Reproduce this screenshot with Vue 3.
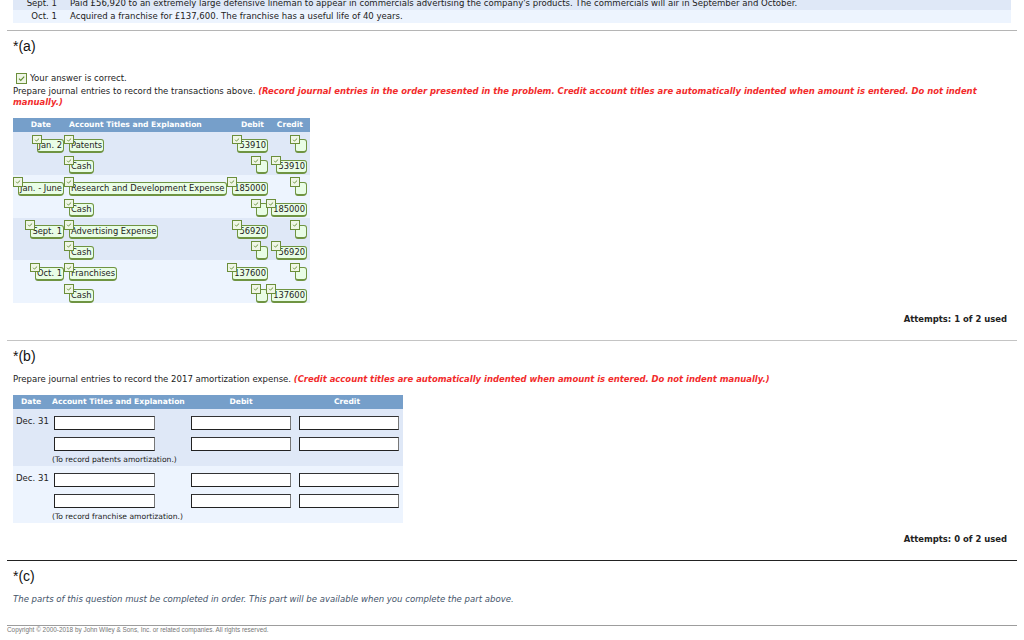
<template>
  <div class="page">
    <table class="facts">
      <tbody>
        <tr class="row-dark">
          <td class="facts__date">Sept. 1</td>
          <td>Paid £56,920 to an extremely large defensive lineman to appear in commercials advertising the company's products. The commercials will air in September and October.</td>
        </tr>
        <tr class="row-light">
          <td class="facts__date">Oct. 1</td>
          <td>Acquired a franchise for £137,600. The franchise has a useful life of 40 years.</td>
        </tr>
      </tbody>
    </table>

    <!-- Part a -->
    <section class="part part--a">
      <h2 class="part__title">*(a)</h2>
      <div class="correct">
        <span class="check check--big">
          <svg viewBox="0 0 10 10"><path d="M2.2 5.2 4.2 7.2 8 3" /></svg>
        </span>
        Your answer is correct.
      </div>
      <p class="prompt">
        Prepare journal entries to record the transactions above.
        <em class="warn">(Record journal entries in the order presented in the problem. Credit account titles are automatically indented when amount is entered. Do not indent manually.)</em>
      </p>

      <div class="journal">
        <div class="journal__head">
          <span class="head-date">Date</span>
          <span class="head-acct">Account Titles and Explanation</span>
          <span class="head-debit">Debit</span>
          <span class="head-credit">Credit</span>
        </div>
        <div
          v-for="(entry, i) in entries"
          :key="i"
          class="journal__group"
          :class="i % 2 ? 'row-light' : 'row-dark'"
        >
          <div class="jrow">
            <div class="cell cell--date"><span class="field">{{ entry.date }}<i class="check"><svg viewBox="0 0 10 10"><path d="M2.5 5 4.3 6.8 7.8 3.4" /></svg></i></span></div>
            <div class="cell"><span class="field">{{ entry.account }}<i class="check"><svg viewBox="0 0 10 10"><path d="M2.5 5 4.3 6.8 7.8 3.4" /></svg></i></span></div>
            <div class="cell cell--debit"><span class="field">{{ entry.amount }}<i class="check"><svg viewBox="0 0 10 10"><path d="M2.5 5 4.3 6.8 7.8 3.4" /></svg></i></span></div>
            <div class="cell cell--credit"><span class="field field--empty"><i class="check"><svg viewBox="0 0 10 10"><path d="M2.5 5 4.3 6.8 7.8 3.4" /></svg></i></span></div>
          </div>
          <div class="jrow">
            <div class="cell cell--date"></div>
            <div class="cell"><span class="field">Cash<i class="check"><svg viewBox="0 0 10 10"><path d="M2.5 5 4.3 6.8 7.8 3.4" /></svg></i></span></div>
            <div class="cell cell--debit"><span class="field field--empty"><i class="check"><svg viewBox="0 0 10 10"><path d="M2.5 5 4.3 6.8 7.8 3.4" /></svg></i></span></div>
            <div class="cell cell--credit"><span class="field">{{ entry.amount }}<i class="check"><svg viewBox="0 0 10 10"><path d="M2.5 5 4.3 6.8 7.8 3.4" /></svg></i></span></div>
          </div>
        </div>
      </div>
      <div class="attempts">Attempts: 1 of 2 used</div>
    </section>

    <!-- Part b -->
    <section class="part part--b">
      <h2 class="part__title">*(b)</h2>
      <p class="prompt prompt--b">
        Prepare journal entries to record the 2017 amortization expense.
        <em class="warn">(Credit account titles are automatically indented when amount is entered. Do not indent manually.)</em>
      </p>

      <div class="blank">
        <div class="blank__head">
          <span>Date</span>
          <span>Account Titles and Explanation</span>
          <span class="blank__center">Debit</span>
          <span class="blank__center">Credit</span>
        </div>
        <div
          v-for="(note, i) in notes"
          :key="i"
          class="blank__group"
          :class="i % 2 ? 'row-light' : 'row-dark'"
        >
          <div class="blank__row">
            <span class="blank__date">Dec. 31</span>
            <input class="inp" type="text" />
            <input class="inp" type="text" />
            <input class="inp" type="text" />
          </div>
          <div class="blank__row">
            <span></span>
            <input class="inp" type="text" />
            <input class="inp" type="text" />
            <input class="inp" type="text" />
          </div>
          <div class="blank__note">{{ note }}</div>
        </div>
      </div>
      <div class="attempts attempts--b">Attempts: 0 of 2 used</div>
    </section>

    <!-- Part c -->
    <section class="part part--c">
      <h2 class="part__title">*(c)</h2>
      <p class="locked">The parts of this question must be completed in order. This part will be available when you complete the part above.</p>
    </section>

    <footer class="copy">Copyright © 2000-2018 by John Wiley &amp; Sons, Inc. or related companies. All rights reserved.</footer>
  </div>
</template>

<script setup>
const entries = [
  { date: 'Jan. 2', account: 'Patents', amount: '53910' },
  { date: 'Jan. - June', account: 'Research and Development Expense', amount: '185000' },
  { date: 'Sept. 1', account: 'Advertising Expense', amount: '56920' },
  { date: 'Oct. 1', account: 'Franchises', amount: '137600' },
]

const notes = [
  '(To record patents amortization.)',
  '(To record franchise amortization.)',
]
</script>

<style>
html, body {
  margin: 0;
  background: #fff;
  overflow: hidden;
}
</style>

<style scoped>
.page {
  width: 1024px;
  height: 640px;
  overflow: hidden;
  font-family: "DejaVu Sans", Verdana, sans-serif;
  font-size: 8.55px;
  color: #222;
}

.row-dark { background: #dfe8f7; }
.row-light { background: #edf4fe; }

.facts {
  width: 998px;
  margin: -3px 0 0 13px;
  border-collapse: collapse;
}
.facts td {
  padding: 0;
  height: 13px;
  line-height: 13px;
}
.facts__date {
  width: 44px;
  text-align: right;
  padding-right: 13px !important;
}

.part {
  margin: 0 7px;
  padding: 0 6px;
}
.part--a {
  margin-top: 7px;
  border-top: 1px solid #b5b5b5;
  height: 309px;
}
.part--b {
  border-top: 1px solid #c4c4c4;
  height: 219px;
}
.part--c {
  border-top: 1px solid #222;
  height: 64px;
}

.part__title {
  margin: 0;
  padding-top: 7px;
  font: normal 14px/16px "Liberation Sans", Arial, sans-serif;
  color: #111;
}

.correct {
  display: flex;
  align-items: center;
  gap: 3px;
  margin: 18px 0 0 3px;
  height: 12px;
}

.check {
  position: absolute;
  left: -6px;
  top: -5.5px;
  box-sizing: border-box;
  width: 10px;
  height: 9.5px;
  background: #eff6e6;
  border: 1px solid #6b8e3a;
  display: block;
}
.check svg {
  display: block;
  width: 100%;
  height: 100%;
}
.check path {
  fill: none;
  stroke: #5d8a2c;
  stroke-width: 1.2;
}
.check--big {
  position: static;
  width: 11px;
  height: 11px;
}

.prompt {
  margin: 2px 0 0;
  line-height: 11px;
}
.warn {
  color: #f22b2b;
  font-weight: bold;
  font-style: italic;
  font-size: 8.45px;
}

.journal {
  width: 297px;
  margin-top: 10px;
}
.journal__head {
  display: grid;
  grid-template-columns: 53px 159px 45px 40px;
  height: 14px;
  line-height: 14px;
  background: #769fca;
  color: #fff;
  font-weight: bold;
  font-size: 7.6px;
}
.head-date { text-align: right; padding-right: 15px; }
.head-acct { padding-left: 3px; white-space: nowrap; }
.head-debit { text-align: right; padding-right: 6px; }
.head-credit { text-align: right; padding-right: 7px; }

.journal__group {
  height: 42.75px;
}
.jrow {
  display: grid;
  grid-template-columns: 53px 159px 45px 40px;
  height: 21.4px;
}
.cell {
  display: flex;
  align-items: flex-start;
  padding-top: 7px;
  white-space: nowrap;
  min-width: 0;
}
.cell--date { justify-content: flex-end; padding-right: 2px; }
.cell--debit { justify-content: flex-end; padding-right: 2px; }
.cell--credit { justify-content: flex-end; padding-right: 3px; }
.jrow .cell:nth-child(2) { padding-left: 3px; }

.field {
  position: relative;
  display: block;
  height: 11px;
  line-height: 11px;
  padding: 0 1px;
  font-size: 8.35px;
  background: #e9fde6;
  border: 1px solid #6f9442;
  border-right-width: 1.5px;
  border-bottom-width: 2px;
  border-radius: 2px 3px 4px 3px;
  color: #1c1c1c;
}
.field--empty {
  width: 8px;
}

.attempts {
  margin-top: 10px;
  text-align: right;
  font-weight: bold;
  font-size: 8.45px;
  padding-right: 4px;
  line-height: 12px;
  color: #222;
}
.attempts--b { margin-top: 10px; }

.prompt--b {
  margin-top: 10px;
}

.blank {
  width: 390px;
  margin-top: 10px;
}
.blank__head {
  display: grid;
  grid-template-columns: 39px 139px 100px 112px;
  height: 14px;
  line-height: 14px;
  background: #769fca;
  color: #fff;
  font-weight: bold;
  font-size: 7.6px;
}
.blank__head span:first-child { padding-left: 8px; }
.blank__head span:nth-child(2) { white-space: nowrap; }
.blank__center { text-align: center; }

.blank__group {
  height: 57px;
  padding-top: 7px;
  box-sizing: border-box;
}
.blank__row {
  display: grid;
  grid-template-columns: 41px 101px 100px 100px;
  height: 21px;
}
.blank__row span {
  padding: 0 0 0 3px;
  line-height: 8px;
  margin-top: 1px;
}
.blank__row .inp:nth-child(2) { width: 101px; }
.blank__row .inp:nth-child(3) { margin-left: 36px; }
.blank__row .inp:nth-child(4) { margin-left: 44px; }
.inp {
  box-sizing: border-box;
  width: 100px;
  height: 14px;
  margin: 0;
  padding: 0;
  background: #fff;
  border: 1px solid #222;
  border-top-color: #333;
  border-right-color: #777;
  border-radius: 0;
  outline: none;
}
.blank__note {
  margin: -3px 0 0 39px;
  line-height: 9px;
  font-size: 7.6px;
}

.locked {
  margin: 9px 0 0;
  font-style: italic;
  line-height: 12px;
  color: #44546a;
}

.copy {
  margin: 0 7px;
  border-top: 1px solid #9d9d9d;
  line-height: 7px;
  font-family: "Liberation Sans", Arial, sans-serif;
  font-size: 6.4px;
  color: #777;
}
</style>
